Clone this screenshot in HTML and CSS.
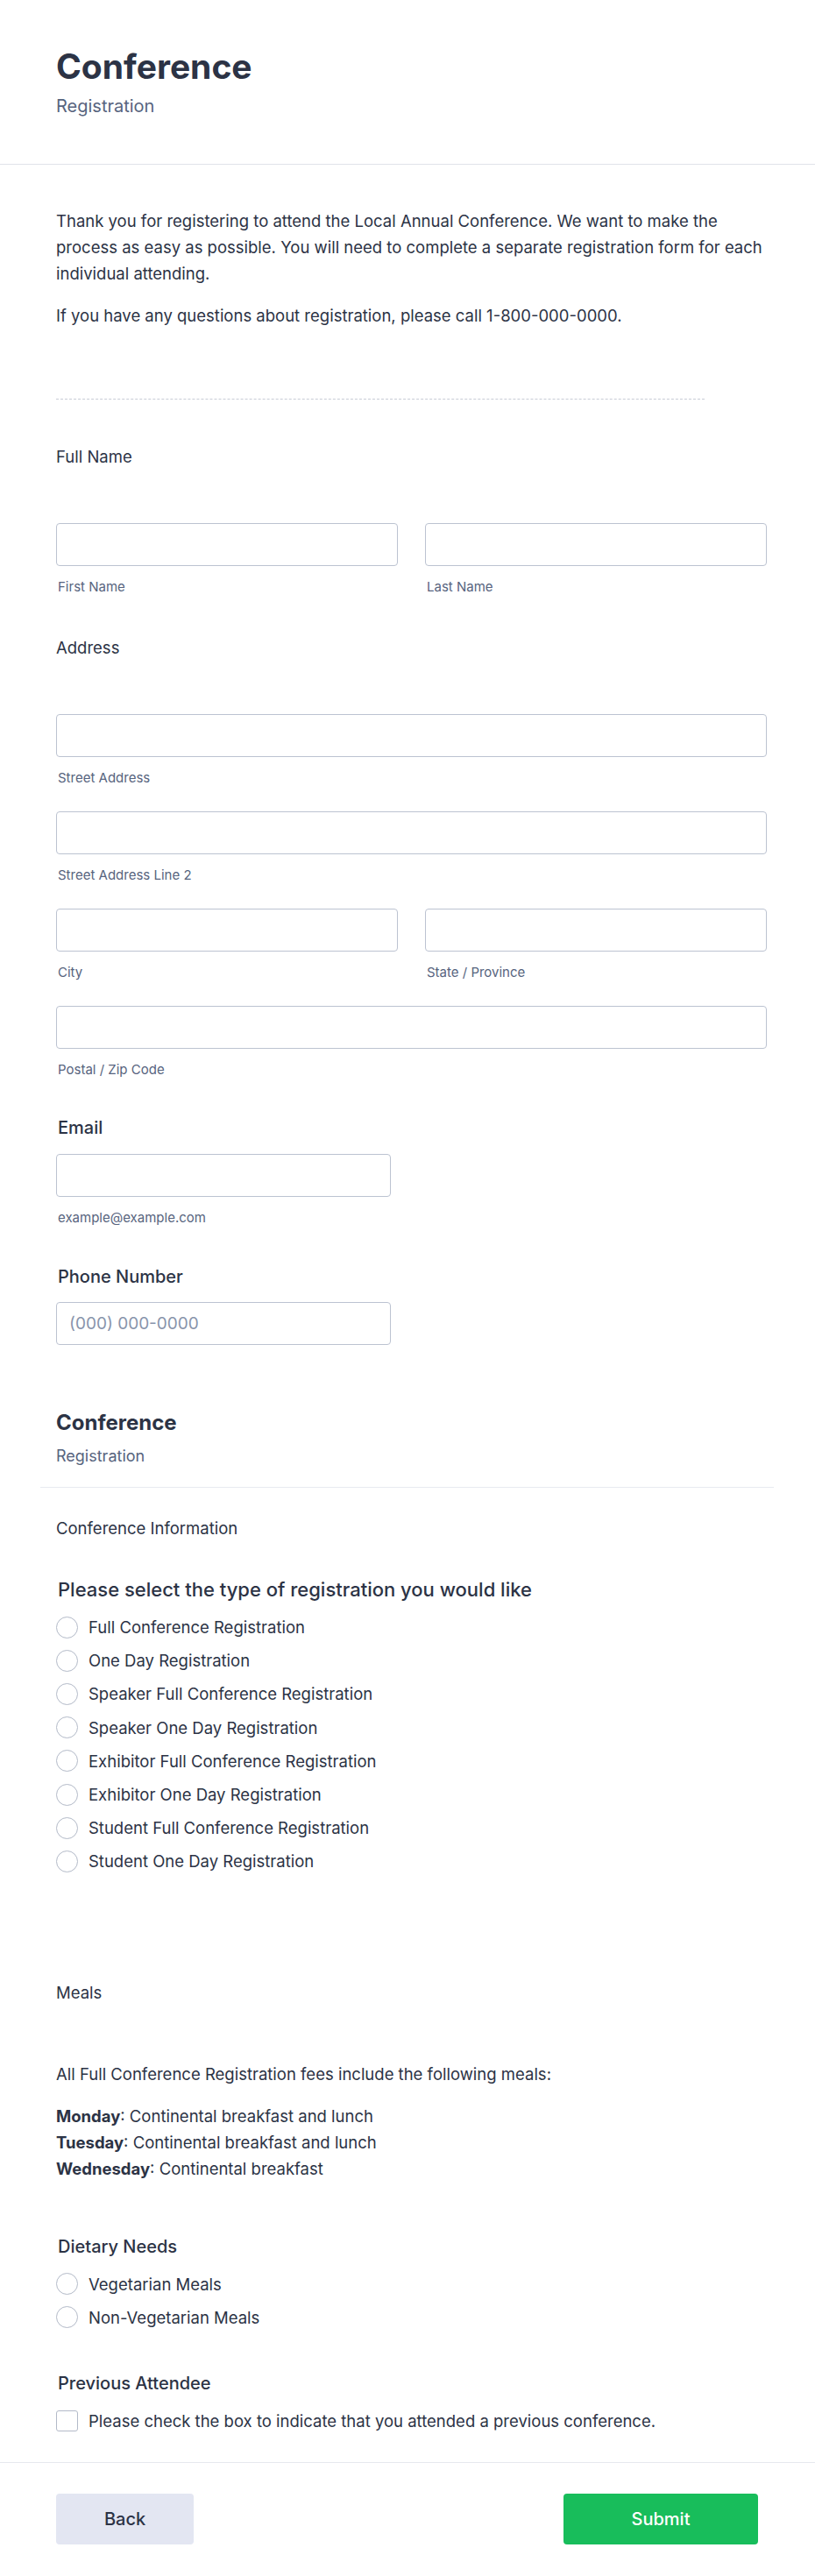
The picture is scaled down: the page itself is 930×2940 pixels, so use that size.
FILE: index.html
```html
<!DOCTYPE html>
<html lang="en">
<head>
<meta charset="utf-8">
<title>Conference Registration</title>
<link rel="stylesheet" href="styles.css">
</head>
<body>
<header class="header">
  <h1 class="title">Conference</h1>
  <p class="subtitle">Registration</p>
</header>

<main class="form">
  <section class="intro">
    <p>Thank you for registering to attend the Local Annual Conference. We want to make the process as easy as possible. You will need to complete a separate registration form for each individual attending.</p>
    <p class="gap">If you have any questions about registration, please call 1-800-000-0000.</p>
  </section>

  <hr class="dotted">

  <div class="label plain m-53">Full Name</div>
  <div class="row m-64">
    <div class="col">
      <input class="input" type="text">
      <div class="sub">First Name</div>
    </div>
    <div class="col">
      <input class="input" type="text">
      <div class="sub">Last Name</div>
    </div>
  </div>

  <div class="label plain m-47">Address</div>
  <input class="input m-64" type="text">
  <div class="sub">Street Address</div>
  <input class="input m-28" type="text">
  <div class="sub">Street Address Line 2</div>
  <div class="row m-28">
    <div class="col">
      <input class="input" type="text">
      <div class="sub">City</div>
    </div>
    <div class="col">
      <input class="input" type="text">
      <div class="sub">State / Province</div>
    </div>
  </div>
  <input class="input m-28" type="text">
  <div class="sub">Postal / Zip Code</div>

  <div class="label strong m-44">Email</div>
  <input class="input narrow m-18" type="email">
  <div class="sub">example@example.com</div>

  <div class="label strong m-45">Phone Number</div>
  <input class="input narrow m-17" type="tel" placeholder="(000) 000-0000">

  <h2 class="section-title">Conference</h2>
  <p class="section-sub">Registration</p>
  <hr class="section-line">

  <div class="label plain m-34">Conference Information</div>

  <div class="label strong big m-46">Please select the type of registration you would like</div>
  <div class="options">
    <label class="option"><input type="radio" name="reg"><span>Full Conference Registration</span></label>
    <label class="option"><input type="radio" name="reg"><span>One Day Registration</span></label>
    <label class="option"><input type="radio" name="reg"><span>Speaker Full Conference Registration</span></label>
    <label class="option"><input type="radio" name="reg"><span>Speaker One Day Registration</span></label>
    <label class="option"><input type="radio" name="reg"><span>Exhibitor Full Conference Registration</span></label>
    <label class="option"><input type="radio" name="reg"><span>Exhibitor One Day Registration</span></label>
    <label class="option"><input type="radio" name="reg"><span>Student Full Conference Registration</span></label>
    <label class="option"><input type="radio" name="reg"><span>Student One Day Registration</span></label>
  </div>

  <div class="label plain m-118">Meals</div>
  <p class="text m-66">All Full Conference Registration fees include the following meals:</p>
  <p class="text m-18"><b>Monday</b>: Continental breakfast and lunch<br><b>Tuesday</b>: Continental breakfast and lunch<br><b>Wednesday</b>: Continental breakfast</p>

  <div class="label strong m-62">Dietary Needs</div>
  <div class="options">
    <label class="option"><input type="radio" name="diet"><span>Vegetarian Meals</span></label>
    <label class="option"><input type="radio" name="diet"><span>Non-Vegetarian Meals</span></label>
  </div>

  <div class="label strong m-44">Previous Attendee</div>
  <div class="options">
    <label class="option"><input type="checkbox" class="check"><span>Please check the box to indicate that you attended a previous conference.</span></label>
  </div>
</main>

<footer class="footer">
  <button class="btn back" type="button">Back</button>
  <button class="btn submit" type="button">Submit</button>
</footer>
</body>
</html>
```

FILE: styles.css
```css
* { box-sizing: border-box; }

body {
  margin: 0;
  background: #ffffff;
  color: #2c3345;
  font-family: Inter, "Noto Sans", "Liberation Sans", sans-serif;
}

.header {
  padding: 52px 55px 54px 64px;
  border-bottom: 1px solid #e0e3ea;
}

.title {
  margin: 0;
  font-size: 39px;
  line-height: 48px;
  font-weight: 700;
}

.subtitle {
  margin: 9px 0 0;
  font-size: 20px;
  line-height: 24px;
  color: #57647e;
}

.form {
  padding: 0 55px 0 64px;
}

.intro {
  padding-top: 49px;
}

.intro p {
  margin: 0;
  font-size: 18.5px;
  line-height: 30px;
}

.intro p.gap { margin-top: 18px; }

.dotted {
  margin: 80px 0 0;
  width: 740px;
  height: 0;
  border: 0;
  border-top: 1px dashed #c8ccd6;
}

.label {
  font-size: 18.5px;
  line-height: 24px;
}

.label.plain { font-weight: 400; }

.label.strong {
  font-size: 20px;
  font-weight: 500;
  padding-left: 2px;
}

.label.strong.big { font-size: 22px; }

.row {
  display: grid;
  grid-template-columns: 1fr 1fr;
  column-gap: 31px;
}

.input {
  display: block;
  width: 100%;
  height: 49px;
  margin: 0;
  padding: 0 14px;
  border: 1px solid #bcc3d1;
  border-radius: 4px;
  background: #ffffff;
  font-family: inherit;
  font-size: 19px;
  color: #2c3345;
}

.input::placeholder { color: #8894ab; }

.input.narrow { width: 382px; }

.sub {
  margin-top: 14px;
  padding-left: 2px;
  font-size: 15px;
  line-height: 20px;
  color: #57647e;
}

.section-title {
  margin: 74px 0 0;
  font-size: 24px;
  line-height: 30px;
  font-weight: 700;
}

.section-sub {
  margin: 11px 0 0;
  font-size: 18px;
  line-height: 24px;
  color: #57647e;
}

.section-line {
  margin: 23px -8px 0 -18px;
  height: 0;
  border: 0;
  border-top: 1px solid #e8eaf0;
}

.options {
  margin-top: 12px;
  display: flex;
  flex-direction: column;
}

.option {
  display: flex;
  align-items: center;
  gap: 12px;
  height: 38.2px;
  font-size: 18.5px;
}

.option input {
  appearance: none;
  -webkit-appearance: none;
  margin: 0;
  width: 25px;
  height: 25px;
  flex: none;
  border: 1px solid #b3bac8;
  border-radius: 50%;
  background: #ffffff;
}

.option input.check {
  border-radius: 3px;
  width: 25px;
  height: 24px;
}

.text {
  margin: 0;
  font-size: 18.5px;
  line-height: 30px;
}

.text b { font-weight: 700; }

.m-17 { margin-top: 17px; }
.m-18 { margin-top: 18px; }
.m-28 { margin-top: 28px; }
.m-34 { margin-top: 34px; }
.m-44 { margin-top: 44px; }
.m-45 { margin-top: 45px; }
.m-46 { margin-top: 46px; }
.m-47 { margin-top: 47px; }
.m-53 { margin-top: 53px; }
.m-62 { margin-top: 62px; }
.m-64 { margin-top: 64px; }
.m-66 { margin-top: 66px; }
.m-118 { margin-top: 118px; }

.footer {
  margin-top: 28px;
  border-top: 1px solid #e6e8ee;
  padding: 35px 65px 36px 64px;
  display: flex;
  justify-content: space-between;
}

.btn {
  height: 58px;
  border: 0;
  border-radius: 4px;
  font-family: inherit;
  font-size: 20px;
  font-weight: 500;
}

.btn.back {
  width: 157px;
  background: #e3e6f2;
  color: #2c3345;
}

.btn.submit {
  width: 222px;
  background: #18bd5b;
  color: #ffffff;
}
```
